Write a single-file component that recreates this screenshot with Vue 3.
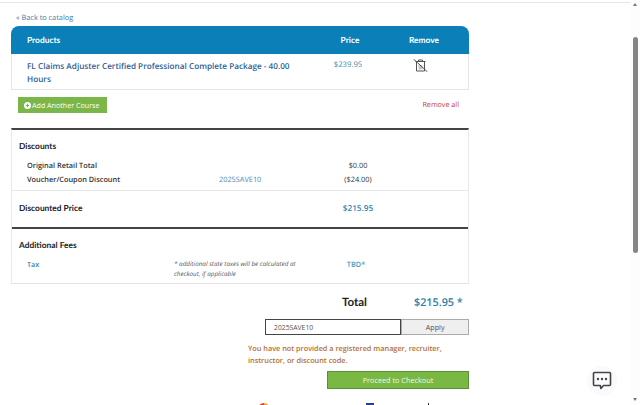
<script setup>
const discounts = [
  { label: 'Original Retail Total', code: '', amount: '$0.00' },
  { label: 'Voucher/Coupon Discount', code: '2025SAVE10', amount: '($24.00)' }
]
</script>

<template>
  <div class="page">
    <div class="topline"></div>
    <main class="content">
      <a class="back">« Back to catalog</a>

      <section class="cart">
        <div class="cart-head row">
          <div class="col-name">Products</div>
          <div class="col-price">Price</div>
          <div class="col-remove">Remove</div>
        </div>
        <div class="cart-item row">
          <div class="col-name item-name">FL Claims Adjuster Certified Professional Complete Package - 40.00 Hours</div>
          <div class="col-price item-price">$239.95</div>
          <div class="col-remove">
            <svg class="trash" width="15" height="13" viewBox="0 0 15 13" fill="none" stroke="#555" stroke-width="1">
              <path d="M2.5 2.5h10M5.5 2.5V1h4v1.5M3.5 2.5V12h8V2.5" />
              <path d="M5.5 6h4v4.5h-4z" fill="#c4c4c4" stroke="none" />
              <path d="M.5 0 14.5 13" stroke-width="1" />
            </svg>
          </div>
        </div>
      </section>

      <div class="actions">
        <button class="add">
          <svg width="7" height="7" viewBox="0 0 9 9"><circle cx="4.5" cy="4.5" r="4.5" fill="#fff" /><path d="M2.2 4.5h4.6M4.5 2.2v4.6" stroke="#7ab648" stroke-width="1.4" /></svg>
          Add Another Course
        </button>
        <a class="remove-all">Remove all</a>
      </div>

      <section class="summary">
        <div class="block discounts">
          <h3>Discounts</h3>
          <div v-for="d in discounts" :key="d.label" class="d-row">
            <div class="d-label">{{ d.label }}</div>
            <div class="d-code">{{ d.code }}</div>
            <div class="d-amount">{{ d.amount }}</div>
          </div>
        </div>
        <div class="discounted">
          <h3>Discounted Price</h3>
          <div class="disc-amount">$215.95</div>
        </div>
        <div class="block fees">
          <h3>Additional Fees</h3>
          <div class="fee-row">
            <div class="fee-label">Tax</div>
            <div class="fee-note">* additional state taxes will be calculated at checkout, if applicable</div>
            <div class="fee-amount">TBD*</div>
          </div>
        </div>
      </section>

      <div class="total">
        <span class="total-label">Total</span>
        <span class="total-amount">$215.95 *</span>
      </div>

      <div class="coupon">
        <input class="coupon-input" value="2025SAVE10" />
        <button class="apply">Apply</button>
      </div>

      <p class="warn">You have not provided a registered manager, recruiter, instructor, or discount code.</p>

      <button class="checkout">Proceed to Checkout</button>

      <div class="logos">
        <span class="logo-mc"></span>
        <span class="logo-pp"></span>
        <span class="logo-tick"></span>
      </div>
    </main>

    <button class="chat" aria-label="Chat">
      <svg width="20" height="20" viewBox="0 0 20 20" fill="none">
        <path d="M2.5 1.5h15a1 1 0 0 1 1 1v11a1 1 0 0 1-1 1h-6l-2.6 3-.6-3H2.5a1 1 0 0 1-1-1v-11a1 1 0 0 1 1-1z" stroke="#444" stroke-width="1.6" stroke-linejoin="round" />
        <circle cx="6" cy="8" r="1.2" fill="#444" />
        <circle cx="10" cy="8" r="1.2" fill="#444" />
        <circle cx="14" cy="8" r="1.2" fill="#444" />
      </svg>
    </button>

    <div class="scrollbar">
      <span class="arrow up"></span>
      <div class="thumb"></div>
      <span class="arrow down"></span>
    </div>
  </div>
</template>

<style scoped>
.page {
  position: relative;
  width: 640px;
  height: 405px;
  overflow: hidden;
  background: #fff;
  font-family: "Open Sans", "Liberation Sans", sans-serif;
  color: #333;
  text-rendering: geometricPrecision;
}
.topline {
  height: 3px;
  box-sizing: border-box;
  border-bottom: 1px solid #e6e6e6;
}
.content {
  width: 458px;
  margin-left: 11px;
  display: flex;
  flex-direction: column;
}
.back {
  margin: 9px 0 0 5px;
  height: 14px;
  font-size: 7.35px;
  line-height: 13px;
  color: #3f7aa6;
}
.row {
  display: flex;
  align-items: flex-start;
}
.cart-head {
  height: 28px;
  background: #0a7fb8;
  border-radius: 8px 8px 0 0;
  color: #fff;
  font-family: Lato, "Open Sans", sans-serif;
  font-size: 8.4px;
  font-weight: 700;
  line-height: 29px;
}
.col-name {
  width: 300px;
  padding-left: 16px;
  box-sizing: border-box;
}
.col-price {
  width: 78px;
  text-align: center;
}
.col-remove {
  width: 70px;
  text-align: center;
}
.cart-item {
  height: 36px;
  box-sizing: border-box;
  border: 1px solid #e6e6e6;
  border-top: none;
}
.cart-item .col-name {
  width: 299px;
  padding-left: 15px;
}
.item-name {
  padding-top: 6px;
  font-size: 8.2px;
  font-weight: 600;
  line-height: 13px;
  color: #2f5f96;
}
.item-price {
  padding-top: 5px;
  padding-right: 4px;
  box-sizing: border-box;
  font-size: 7.7px;
  line-height: 13px;
  color: #4a8ab0;
}
.trash {
  margin: 5px 8px 0 0;
}
.actions {
  display: flex;
  justify-content: space-between;
  align-items: center;
  height: 16px;
  margin-top: 7px;
}
.add {
  margin-left: 7px;
  width: 89px;
  height: 16px;
  padding: 0 0 0 6px;
  display: flex;
  align-items: center;
  gap: 1px;
  border: none;
  background: #7ab648;
  color: #fff;
  font: 7.15px "Open Sans", sans-serif;
  white-space: nowrap;
}
.remove-all {
  margin-right: 10px;
  font-size: 7.2px;
  color: #c8404a;
}
.summary {
  margin-top: 15px;
  border-top: 2px solid #444;
  border-left: 1px solid #eaeaea;
  border-right: 1px solid #eaeaea;
  border-bottom: 1px solid #e2e2e2;
  height: 156px;
  box-sizing: border-box;
}
h3 {
  margin: 0;
  font-family: Lato, "Open Sans", sans-serif;
  font-size: 8.4px;
  font-weight: 700;
  color: #222;
}
.block h3 { padding-left: 7px; line-height: 13px; }
.discounts {
  padding-top: 10px;
  height: 61px;
  box-sizing: border-box;
  border-bottom: 1px solid #e6e6e6;
}
.d-row, .fee-row {
  display: flex;
}
.d-row {
  height: 14px;
  line-height: 14px;
  font-size: 7.35px;
}
.discounts h3 { margin-bottom: 6px; }
.d-label {
  width: 207px;
  padding-left: 15px;
  box-sizing: border-box;
  font-weight: 600;
  color: #333;
}
.d-code {
  width: 92px;
  color: #4a8ab0;
  text-align: left;
}
.d-amount {
  width: 94px;
  text-align: center;
  color: #333;
}
.discounted {
  display: flex;
  align-items: center;
  height: 38px;
  padding-bottom: 2px;
  border-bottom: 2px solid #444;
  box-sizing: border-box;
}
.discounted h3 {
  width: 299px;
  padding-left: 7px;
  box-sizing: border-box;
}
.disc-amount {
  width: 94px;
  text-align: center;
  font-size: 8.2px;
  font-weight: 600;
  color: #2f86ad;
}
.fees {
  padding-top: 10px;
}
.fees h3 { margin-bottom: 6px; }
.fee-row {
  align-items: flex-start;
}
.fee-label {
  width: 162px;
  margin-top: 1px;
  padding-left: 15px;
  box-sizing: border-box;
  font-size: 7.2px;
  font-weight: 600;
  line-height: 13px;
  color: #2f86ad;
}
.fee-note {
  width: 135px;
  margin-top: 1px;
  font-size: 6.3px;
  font-style: italic;
  line-height: 10px;
  color: #555;
}
.fee-amount {
  width: 94px;
  margin-top: 1px;
  text-align: center;
  font-size: 7.3px;
  font-weight: 600;
  line-height: 13px;
  color: #4a9abc;
}
.total {
  margin-top: 8px;
  height: 20px;
  display: flex;
  align-items: center;
  font-weight: 600;
  white-space: nowrap;
}
.total-label {
  margin-left: 331px;
  width: 72px;
  font-family: Lato, "Open Sans", sans-serif;
  font-weight: 700;
  font-size: 11.5px;
  color: #222;
}
.total-amount {
  font-size: 10.8px;
  color: #2f7fa8;
}
.coupon {
  margin: 7px 0 0 254px;
  display: flex;
  height: 16px;
}
.coupon-input {
  width: 137px;
  height: 16px;
  box-sizing: border-box;
  border: 1px solid #444;
  padding: 0 0 0 8px;
  font: 6.8px "Open Sans", sans-serif;
  color: #555;
  outline: none;
}
.apply {
  width: 68px;
  height: 16px;
  border: 1px solid #aaa;
  background: #efefef;
  font: 7.2px "Open Sans", sans-serif;
  color: #555;
  padding: 0;
}
.warn {
  margin: 8px 0 0 237px;
  width: 215px;
  font-size: 7.3px;
  font-weight: 600;
  line-height: 12px;
  color: #b5702f;
}
.checkout {
  margin: 4px 0 0 316px;
  width: 142px;
  height: 18px;
  border: 1px solid #5c8f38;
  background: #78b843;
  color: #f2f8ec;
  font: 7.3px "Open Sans", sans-serif;
  padding: 0;
}
.logos {
  position: relative;
  height: 8px;
  margin-top: 14px;
}
.logo-mc {
  position: absolute;
  left: 247px;
  top: 0;
  width: 12px;
  height: 6px;
  border-radius: 6px 6px 0 0;
  background: linear-gradient(90deg, #d8402f 50%, #f0a030 50%);
}
.logo-pp {
  position: absolute;
  left: 355px;
  top: 0;
  width: 8px;
  height: 6px;
  background: #24408e;
}
.logo-tick {
  position: absolute;
  left: 417px;
  top: 0;
  width: 1px;
  height: 6px;
  background: #333;
}
.chat {
  position: absolute;
  left: 592px;
  top: 371px;
  width: 20px;
  height: 20px;
  padding: 0;
  border: none;
  border-radius: 50%;
  background: #fafafc;
  box-shadow: 0 0 0 5px #fafafc;
}
.scrollbar {
  position: absolute;
  right: 0;
  top: 0;
  width: 10px;
  height: 405px;
  background: #fdfdfd;
}
.thumb {
  position: absolute;
  left: 3px;
  top: 37px;
  width: 5px;
  height: 216px;
  border-radius: 3px;
  background: #858585;
}
.arrow {
  position: absolute;
  left: 3px;
  width: 0;
  height: 0;
  border-left: 2.5px solid transparent;
  border-right: 2.5px solid transparent;
}
.arrow.up {
  top: 3px;
  border-bottom: 3px solid #777;
}
.arrow.down {
  bottom: 4px;
  border-top: 3px solid #777;
}
</style>

<style>
html, body { margin: 0; overflow: hidden; }
</style>
